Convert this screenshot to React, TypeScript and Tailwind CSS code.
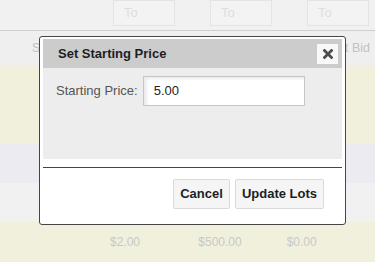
import React from "react";

const font = { fontFamily: '"Liberation Sans", Arial, sans-serif' };

function FilterInput() {
  return (
    <div className="w-[62px] h-[26px] border border-[#e4e4e4] bg-[#f3f3f3] flex items-center pl-[10px] text-[13px] text-[#dedede]">
      To
    </div>
  );
}

export default function App() {
  return (
    <div className="relative w-[375px] h-[262px] overflow-hidden bg-[#f1f0dc]" style={font}>
      {/* page behind the dialog */}
      <div className="h-[30px] bg-[#f1f1f1] flex items-start pl-[113px] gap-[35px]">
        <FilterInput />
        <FilterInput />
        <FilterInput />
      </div>
      <div className="h-px bg-[#cfcfcf]" />
      <div className="h-[34px] bg-[#efefef] flex items-center text-[12.5px] text-[#c2c2c2]">
        <span className="pl-[32px]">S</span>
        <span className="ml-auto pr-[5px]">t Bid</span>
      </div>
      <div className="h-[79px] bg-[#f1f0dc]" />
      <div className="h-[39px] bg-[#ebebf1]" />
      <div className="h-[39px] bg-[#f1f1f1]" />
      <div className="h-[40px] bg-[#f1f0dc] flex items-center pl-[110px] text-[12px] text-[#c8c8c8]">
        <span className="w-[97px]">$2.00</span>
        <span className="w-[97px]">$500.00</span>
        <span className="w-[97px]">$0.00</span>
      </div>

      {/* dialog */}
      <div className="absolute left-[39px] top-[36px] w-[307px] h-[189px] flex flex-col bg-white border border-[#454545] rounded-[3px] px-[3px] pt-[2px] pb-[3px]">
        <div className="h-[29px] bg-[#cccccc] flex items-center pl-[15px] pr-[4px]">
          <span className="text-[13px] font-bold text-[#1e1e24]">Set Starting Price</span>
          <button className="ml-auto w-[21px] h-[20px] bg-[#f8f8f8] flex items-center justify-center">
            <svg width="10" height="10" viewBox="0 0 10 10">
              <path d="M1.5 1.5L8.5 8.5M8.5 1.5L1.5 8.5" stroke="#4d4d4d" strokeWidth="2.8" strokeLinecap="square" />
            </svg>
          </button>
        </div>
        <div className="h-[91px] bg-[#ededed] flex items-start pt-[8px] pl-[13px]">
          <div className="h-[30px] flex items-center text-[13px] text-[#555]">Starting Price:</div>
          <div className="ml-[5px] w-[162px] h-[30px] bg-white border border-[#c6c6c6] shadow-[inset_3px_2px_3px_rgba(0,0,0,0.08)] flex items-center pl-[10px] text-[13px] text-[#222]">
            5.00
          </div>
        </div>
        <div className="mt-[8px] border-t border-[#454545]" />
        <div className="flex-1 flex justify-end items-start gap-[5px] pt-[11px] pr-[18px]">
          <button className="h-[30px] px-[6px] bg-[#f5f5f5] border border-[#dadada] rounded-[2px] text-[13px] font-bold text-[#1e1e24]">
            Cancel
          </button>
          <button className="h-[30px] px-[6px] bg-[#f5f5f5] border border-[#dadada] rounded-[2px] text-[13px] font-bold text-[#1e1e24]">
            Update Lots
          </button>
        </div>
      </div>
    </div>
  );
}
